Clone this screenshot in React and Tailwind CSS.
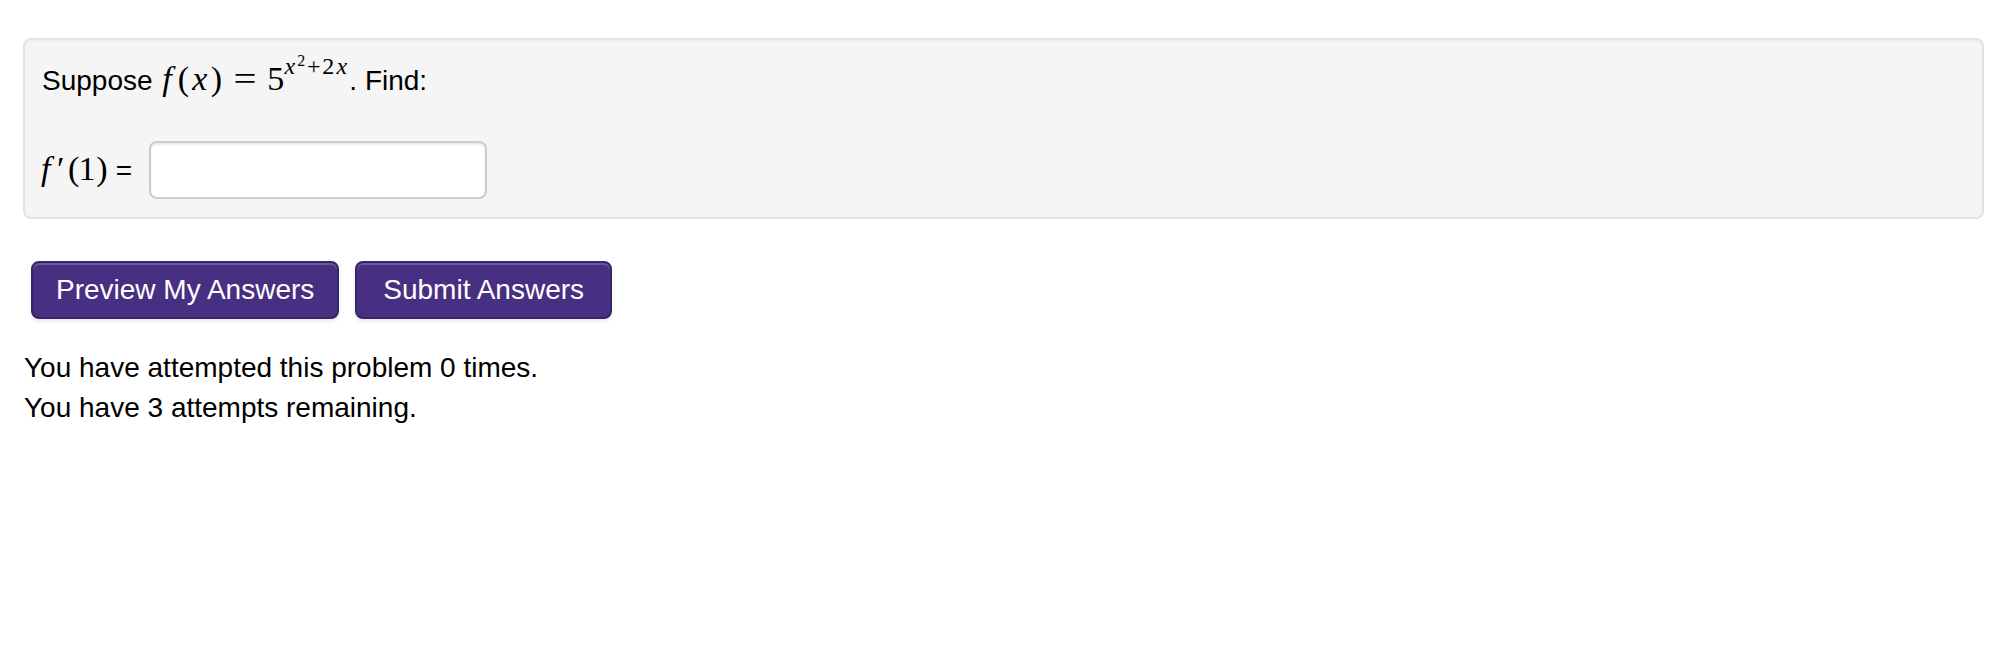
import React from "react";

const serif = "font-['Liberation_Serif','DejaVu_Serif',serif]";

function G({ w, children, italic = false, className = "", left = false }) {
  return (
    <span
      className={`inline-block leading-none ${left ? "text-left" : "text-center"} ${italic ? "italic" : ""} ${className}`}
      style={{ width: w }}
    >
      {children}
    </span>
  );
}

const btn =
  "rounded-[8px] border-2 border-[#37246b] bg-[#472f82] py-[7px] text-[28px] leading-[40px] text-white shadow-[inset_0_2px_0_rgba(255,255,255,0.2),0_2px_4px_rgba(0,0,0,0.1)]";

export default function App() {
  return (
    <div className="min-h-[650px] bg-white px-[23px] pt-[38px] font-['Liberation_Sans',Arial,sans-serif] text-[28px] leading-[40px] text-black">
      <div className="rounded-[8px] border-2 border-[#e3e3e3] bg-[#f5f5f5] pt-[13px] pb-[18px] pl-[17px] shadow-[inset_0_2px_2px_rgba(0,0,0,0.03)]">
        <div className="h-[40px] whitespace-nowrap">
          <span>Suppose </span>
          <span className={`${serif} text-[34px]`}>
            <G w={15} italic left className="ml-[2px]">f</G>
            <G w={12}>(</G>
            <G w={21} italic>x</G>
            <G w={12}>)</G>
            <G w={24} className="ml-[11px] scale-x-[1.2]">=</G>
            <G w={15} className="ml-[10px]">5</G>
            <span className="inline-block text-[24px] leading-none align-[16px]">
              <G w={15} italic>x</G>
              <G w={8} className="text-[16px] align-[8px]">2</G>
              <G w={17}>+</G>
              <G w={12}>2</G>
              <G w={15} italic>x</G>
            </span>
          </span>
          <span>. Find:</span>
        </div>
        <div className="mt-[48px] flex h-[58px] items-center gap-[17px]">
          <div className="whitespace-nowrap">
            <span className={`${serif} text-[34px]`}>
              <G w={16} italic left className="-ml-[1px]">f</G>
              <G w={11} left>′</G>
              <G w={10}>(</G>
              <G w={18}>1</G>
              <G w={12}>)</G>
            </span>
            <span> =</span>
          </div>
          <input
            type="text"
            className="h-[58px] w-[338px] rounded-[8px] border-2 border-[#cccccc] bg-white px-[12px] shadow-[inset_0_2px_2px_rgba(0,0,0,0.075)] outline-none"
          />
        </div>
      </div>

      <div className="mt-[42px] ml-[8px] flex gap-[16px]">
        <button className={`${btn} px-[23px]`}>Preview My Answers</button>
        <button className={`${btn} px-[26px]`}>Submit Answers</button>
      </div>

      <div className="mt-[29px] pl-[1px]">
        <div>You have attempted this problem 0 times.</div>
        <div>You have 3 attempts remaining.</div>
      </div>
    </div>
  );
}
